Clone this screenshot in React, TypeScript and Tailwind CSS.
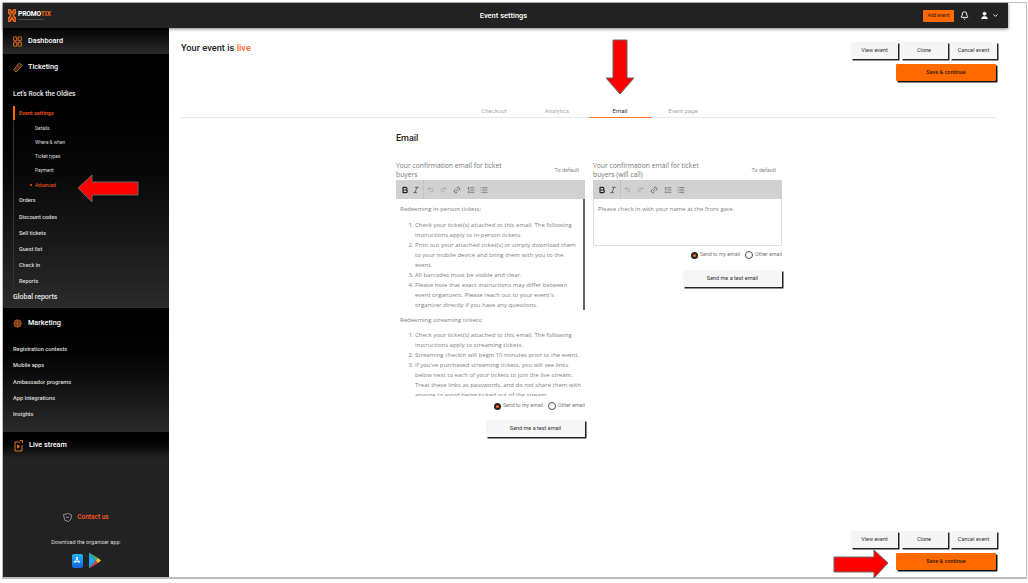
import React from 'react'
import { Bold, Italic, Undo2, Redo2, Link2, ListOrdered, List, Bell, User, ChevronDown } from 'lucide-react'

const sans = 'font-["Roboto",sans-serif]'

const ArrowShape: React.FC<{ points: string; className: string; w: number; h: number }> = ({ points, className, w, h }) => (
  <svg className={`absolute ${className}`} width={w} height={h} viewBox={`0 0 ${w} ${h}`}>
    <polygon points={points} fill="#ff0000" stroke="#666" strokeWidth="1" />
  </svg>
)

const GhostButton: React.FC<{ label: string }> = ({ label }) => (
  <button
    type="button"
    className="w-[47px] h-[17px] bg-[#f5f5f5] text-[5.5px] text-[#333] shadow-[1.5px_1.5px_0_#222]"
  >
    {label}
  </button>
)

const ActionButtons: React.FC<{ className?: string }> = ({ className }) => (
  <div className={`flex flex-col items-end gap-[5px] pr-[11px] ${className ?? ''}`}>
    <div className="flex gap-[2.5px]">
      <GhostButton label="View event" />
      <GhostButton label="Clone" />
      <GhostButton label="Cancel event" />
    </div>
    <button
      type="button"
      className="w-[100px] h-[17px] mr-[1px] rounded-[1px] bg-[#ff6a00] text-[5.5px] font-medium text-[#331500] shadow-[1.5px_1.5px_0_#111]"
    >
      Save &amp; continue
    </button>
  </div>
)

const Toolbar = () => (
  <div className="h-[19px] bg-[#d1d1d1] flex items-center pl-[5px] text-[#555]">
    <Bold className="w-[8px] h-[8px] text-[#222]" strokeWidth={3.5} />
    <Italic className="w-[8px] h-[8px] ml-[3px]" strokeWidth={2.5} />
    <div className="w-px h-[19px] bg-[#c2c2c2] ml-[3px]" />
    <Undo2 className="w-[7px] h-[7px] ml-[3px] text-[#999]" />
    <Redo2 className="w-[7px] h-[7px] ml-[6px] text-[#999]" />
    <Link2 className="w-[8px] h-[8px] ml-[6px] -rotate-45" />
    <ListOrdered className="w-[8px] h-[8px] ml-[6px]" />
    <List className="w-[8px] h-[8px] ml-[5px]" />
  </div>
)

const SendRow = () => (
  <div className="flex items-center justify-end gap-[2px] text-[5.25px] text-[#777] h-[12px]">
    <span className="w-[7px] h-[7px] rounded-full bg-[#222] flex items-center justify-center">
      <span className="w-[3px] h-[3px] rounded-full bg-[#ff6a00]" />
    </span>
    <span className="mr-[3px]">Send to my email</span>
    <span className="w-[8px] h-[8px] rounded-full border-[0.5px] border-[#555] bg-white" />
    <span>Other email</span>
  </div>
)

const TestButton: React.FC<{ className: string }> = ({ className }) => (
  <div className={`flex justify-end ${className}`}>
    <button
      type="button"
      className="w-[99px] h-[17px] bg-[#f6f6f6] text-[5.5px] text-[#333] shadow-[1.5px_1.5px_0_#222]"
    >
      Send me a test email
    </button>
  </div>
)

const FieldHead: React.FC<{ label: string }> = ({ label }) => (
  <div className="flex items-end justify-between h-[20px] pb-[1.5px]">
    <div className='w-[112px] font-["Open_Sans",sans-serif] text-[6.75px] leading-[9px] text-[#777]'>{label}</div>
    <div className="text-[5.5px] leading-[9px] text-[#888] mr-[6px] mb-[4px]">To default</div>
  </div>
)

const inPerson = [
  'Check your ticket(s) attached to this email. The following instructions apply to in-person tickets.',
  'Print out your attached ticket(s) or simply download them to your mobile device and bring them with you to the event.',
  'All barcodes must be visible and clear.',
  "Please note that exact instructions may differ between event organizers. Please reach out to your event's organizer directly if you have any questions.",
]

const streaming = [
  'Check your ticket(s) attached to this email. The following instructions apply to streaming tickets.',
  'Streaming checkin will begin 10 minutes prior to the event.',
]

const SubItem: React.FC<{ label: string; active?: boolean }> = ({ label, active }) => (
  <div className={`h-[14.3px] flex items-center pl-[21px] text-[4.75px] relative ${active ? 'text-[#ff5a1f]' : 'text-[#ddd]'}`}>
    {active && <span className="absolute left-[16px] w-[2px] h-[2px] rounded-full bg-[#ff5a1f]" />}
    {label}
  </div>
)

const NavItem: React.FC<{ label: string }> = ({ label }) => (
  <div className="h-[16.2px] flex items-center pl-[5px] text-[5.5px] font-medium text-[#ddd]">{label}</div>
)

const MarketingItem: React.FC<{ label: string }> = ({ label }) => (
  <div className="h-[16.4px] flex items-center pl-[10px] text-[5.7px] font-medium text-[#ddd]">{label}</div>
)

const Sidebar = () => (
  <aside className="w-[166px] shrink-0 bg-[#222] flex flex-col text-white">
    <div className="h-[26px] pt-[1px] bg-gradient-to-b from-[#050505] to-[#2b2b2b] flex items-center pl-[10px]">
      <svg width="9" height="11" viewBox="0 0 11 13" fill="none" stroke="#c9641e" strokeWidth="1.4">
        <rect x="0.7" y="0.7" width="4" height="5" rx="1.6" />
        <rect x="6.3" y="0.7" width="4" height="5" rx="1.6" />
        <rect x="0.7" y="7.3" width="4" height="5" rx="1.6" />
        <rect x="6.3" y="7.3" width="4" height="5" rx="1.6" />
      </svg>
      <span className="ml-[6px] text-[7.25px] font-medium">Dashboard</span>
    </div>

    <div className="h-[254px] bg-gradient-to-b from-[#000] to-[#2b2b2b] flex flex-col">
      <div className="h-[26px] pt-[1px] flex items-center pl-[10px]">
        <svg width="10" height="11" viewBox="0 0 11 12" fill="#4a2510" stroke="#c0702c" strokeWidth="1">
          <path d="M7 1l3 3-6.5 7L0.8 8.2z" />
          <path d="M5 4l2.5 2.5" strokeDasharray="1 1" />
        </svg>
        <span className="ml-[5px] text-[7.25px] font-medium">Ticketing</span>
      </div>
      <div className="h-[27px] pt-[1px] flex items-center pl-[10px] text-[6.75px] font-medium text-[#e8e8e8]">
        Let's Rock the Oldies
      </div>
      <div className="ml-[10px] border-l border-[#333]">
        <div className="h-[14px] -mt-[1px] mb-[1px] flex items-center pl-[4px] text-[5.5px] font-medium text-[#ff5a1f] border-l-2 border-[#ff6a00] -ml-px">
          Event settings
        </div>
        <SubItem label="Details" />
        <SubItem label="Where & when" />
        <SubItem label="Ticket types" />
        <SubItem label="Payment" />
        <SubItem label="Advanced" active />
        <NavItem label="Orders" />
        <NavItem label="Discount codes" />
        <NavItem label="Sell tickets" />
        <NavItem label="Guest list" />
        <NavItem label="Check in" />
        <NavItem label="Reports" />
      </div>
      <div className="h-[15px] flex items-center pl-[10px] text-[7px] font-medium text-[#e8e8e8]">Global reports</div>
    </div>

    <div className="h-[124px] bg-gradient-to-b from-[#000] to-[#2b2b2b] flex flex-col">
      <div className="h-[30px] flex items-center pl-[10px]">
        <svg width="10" height="11" viewBox="0 0 12 12" fill="none" stroke="#a9571d" strokeWidth="1">
          <circle cx="5.5" cy="6" r="4.5" fill="#5a2c10" />
          <path d="M1 6h9M5.5 1.5v9M2 3.5c2 1 5 1 7 0M2 8.5c2-1 5-1 7 0" />
        </svg>
        <span className="ml-[5px] text-[7.25px] font-medium">Marketing</span>
      </div>
      <div className="mt-[3px]">
        <MarketingItem label="Registration contests" />
        <MarketingItem label="Mobile apps" />
        <MarketingItem label="Ambassador programs" />
        <MarketingItem label="App Integrations" />
        <MarketingItem label="Insights" />
      </div>
    </div>

    <div className="h-[26px] pt-[1px] bg-gradient-to-b from-[#000] to-[#222] flex items-center pl-[11px]">
      <svg width="10" height="12" viewBox="0 0 10 12" fill="none" stroke="#e0701f" strokeWidth="1">
        <path d="M6 2H1v9h7V5" />
        <path d="M6 0.5h2.5V3" />
        <path d="M3.5 5l2 1.5-2 1.5z" fill="#e0701f" />
      </svg>
      <span className="ml-[5px] text-[7.25px] font-medium">Live stream</span>
    </div>

    <div className="flex-1 flex flex-col items-center justify-end pb-[8px]">
      <div className="flex items-center gap-[5px]">
        <svg width="9" height="9" viewBox="0 0 9 9" fill="none" stroke="#aaa" strokeWidth="0.8">
          <path d="M0.5 1.5l5-1 3 1.5-.5 4-2.5 2.5L2 7.5 1 4z" />
          <path d="M3 4l3 .5" />
        </svg>
        <span className="text-[6.5px] font-medium text-[#ff5a1f]">Contact us</span>
      </div>
      <div className="mt-[15px] text-[5.5px] text-[#ddd]">Download the organizer app:</div>
      <div className="mt-[6px] flex items-center gap-[6px]">
        <div className="w-[11px] h-[14px] rounded-[2px] bg-gradient-to-b from-[#22b5f5] to-[#1566e0] flex items-center justify-center">
          <svg width="8" height="9" viewBox="0 0 8 9" fill="none" stroke="#fff" strokeWidth="0.9">
            <path d="M4.8 1L1.5 7M3.2 1l3.3 6M0.8 5.6h6.4" />
          </svg>
        </div>
        <svg width="12" height="17" viewBox="0 0 12 16">
          <path d="M0 0l7 8-7 8z" fill="#1ea7e8" />
          <path d="M0 0l9 5.5L7 8z" fill="#3dbd6c" />
          <path d="M0 16l9-5.5L7 8z" fill="#e4404f" />
          <path d="M9 5.5L12 8l-3 2.5L7 8z" fill="#fbc02d" />
        </svg>
      </div>
    </div>
  </aside>
)

export default function App() {
  return (
    <div className={`relative w-[1028px] h-[583px] overflow-hidden bg-white pl-[2px] pt-[2px] pr-[1px] ${sans}`}>
      <div className="h-[577px] border border-[#bdbdbd] border-b-2 flex flex-col">
        <div className="w-[1005px] flex flex-col flex-1 min-h-0">
          <header className="h-[25px] shrink-0 bg-[#222] flex shadow-[0_1px_3px_rgba(0,0,0,0.5)] relative z-10">
            <div className="flex-1 flex items-center pl-[5px] text-white">
              <svg width="8" height="13" viewBox="0 0 8 13">
                <path d="M0 0h8v13H0z" fill="#f26a1b" />
                <path d="M2.5 0L4 2.5 5.5 0zM2.5 13L4 10.5 5.5 13zM0 4.5L2 6.5 0 8.5zM8 4.5L6 6.5 8 8.5z" fill="#222" />
                <path d="M1 1.5l6 10M7 1.5l-6 10" stroke="#222" strokeWidth="0.8" />
              </svg>
              <div className="ml-[2px] flex flex-col leading-none">
                <span className="text-[6.75px] font-bold tracking-tight">
                  PROMO<span className="text-[#f26a1b]">TIX</span>
                </span>
                <span className="text-[2px] text-[#999]">YOUR EVENT, OUR SUPPORT</span>
              </div>
            </div>
            <div className="flex items-center justify-center text-[7.5px] font-medium text-white">Event settings</div>
            <div className="flex-1 flex items-center justify-end text-white pr-[9px]">
              <button type="button" className="w-[31px] h-[12px] rounded-[1px] bg-[#ff6a00] text-[5px] text-[#331500]">
                Add event
              </button>
              <Bell className="w-[9px] h-[9px] ml-[6px]" fill="#222" strokeWidth={2.5} />
              <User className="w-[9px] h-[9px] ml-[11px]" fill="white" />
              <ChevronDown className="w-[7px] h-[7px] ml-[3px]" strokeWidth={3} />
            </div>
          </header>

          <div className="flex flex-1 min-h-0">
            <Sidebar />
            <main className="flex-1 flex flex-col min-w-0">
              <div className="flex items-start justify-between pl-[12px] pt-[14px] h-[76px] shrink-0">
                <div className="text-[9.25px] font-medium text-[#222] mt-[-1px]">
                  Your event is <span className="text-[#ff6a2a]">live</span>
                </div>
                <ActionButtons />
              </div>

              <div className="mx-[12px] h-[14px] flex justify-center border-b border-[#e5e5e5] shrink-0">
                <div className="w-[63px] pt-[2px] text-center text-[6px] text-[#aaa]">Checkout</div>
                <div className="w-[63px] pt-[2px] text-center text-[6px] text-[#aaa]">Analytics</div>
                <div className="w-[63px] h-[14px] pt-[2px] text-center text-[6px] text-[#333] border-b border-[#ff7a2a]">Email</div>
                <div className="w-[63px] pt-[2px] text-center text-[6px] text-[#aaa]">Event page</div>
              </div>

              <div className="pl-[227px] flex-1 min-h-0 flex flex-col">
                <div className="pt-[14px] h-[42px] text-[9px] font-medium text-[#222]">Email</div>
                <div className="flex gap-[8px] items-start">
                  <div className="w-[189px]">
                    <FieldHead label="Your confirmation email for ticket buyers" />
                    <Toolbar />
                    <div className='relative h-[197px] overflow-hidden bg-white font-["Open_Sans",sans-serif] text-[6px] leading-[10px] text-[#808080] pl-[4px] pr-[5px] pt-[5px]'>
                      <p>Redeeming in-person tickets:</p>
                      <ol className="list-decimal pl-[15px] mt-[6px]">
                        {inPerson.map(t => <li key={t}>{t}</li>)}
                      </ol>
                      <p className="mt-[5px]">Redeeming streaming tickets:</p>
                      <ol className="list-decimal pl-[15px] mt-[5px]">
                        {streaming.map(t => <li key={t}>{t}</li>)}
                        <li className="-mr-[2px]">
                          If you've purchased streaming tickets, you will see links below next to each of your tickets to join the live stream. Treat these links as passwords, and do not share them with anyone to avoid being kicked out of the stream.
                        </li>
                      </ol>
                      <div className="absolute right-0 top-0 w-[2px] h-[111px] bg-[#666]" />
                    </div>
                    <div className="mt-[4px]"><SendRow /></div>
                    <TestButton className="mt-[8px]" />
                  </div>
                  <div className="w-[189px]">
                    <FieldHead label="Your confirmation email for ticket buyers (will call)" />
                    <Toolbar />
                    <div className='h-[47px] bg-white border border-[#ddd] border-t-0 rounded-b-[2px] font-["Open_Sans",sans-serif] text-[6px] text-[#808080] pl-[4px] pt-[6px]'>
                      Please check in with your name at the front gate.
                    </div>
                    <div className="mt-[3px]"><SendRow /></div>
                    <TestButton className="mt-[9px]" />
                  </div>
                </div>
              </div>

              <ActionButtons className="pb-[7px] shrink-0" />
            </main>
          </div>
        </div>
      </div>

      {/* red callout arrows drawn over the page */}
      <ArrowShape className="left-[77px] top-[174px]" w={62} h={30} points="1,14 15,1 15,8 61,8 61,21 15,21 15,28" />
      <ArrowShape className="left-[605px] top-[39px]" w={31} h={56} points="8,1 22,1 22,39 29,39 15,55 1,39 8,39" />
      <ArrowShape className="left-[833px] top-[549px]" w={56} h={30} points="1,8 41,8 41,1 55,14 41,29 41,23 1,23" />
    </div>
  )
}
